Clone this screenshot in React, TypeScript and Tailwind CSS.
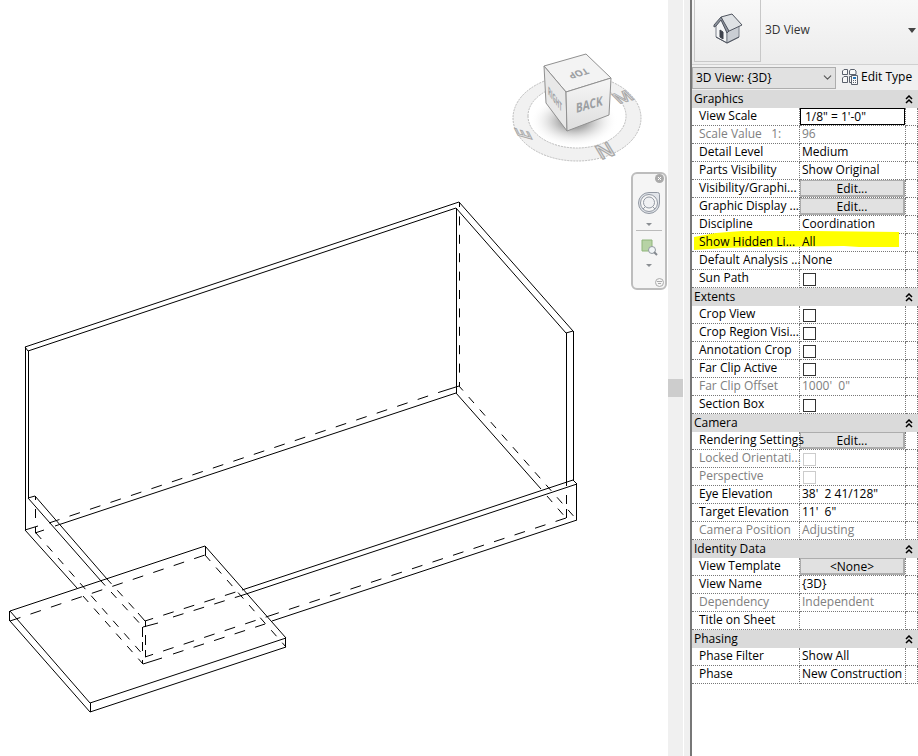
import { ChevronDown } from 'lucide-react'

interface Property {
  label: string
  value?: string
  kind?: 'text' | 'button' | 'checkbox' | 'input'
  disabled?: boolean
  highlight?: boolean
}

interface Group {
  title: string
  rows: Property[]
}

const groups: Group[] = [
  {
    title: 'Graphics',
    rows: [
      { label: 'View Scale', value: '1/8" = 1\'-0"', kind: 'input' },
      { label: 'Scale Value   1:', value: '96', disabled: true },
      { label: 'Detail Level', value: 'Medium' },
      { label: 'Parts Visibility', value: 'Show Original' },
      { label: 'Visibility/Graphi...', value: 'Edit...', kind: 'button' },
      { label: 'Graphic Display ...', value: 'Edit...', kind: 'button' },
      { label: 'Discipline', value: 'Coordination' },
      { label: 'Show Hidden Li...', value: 'All', highlight: true },
      { label: 'Default Analysis ...', value: 'None' },
      { label: 'Sun Path', kind: 'checkbox' },
    ],
  },
  {
    title: 'Extents',
    rows: [
      { label: 'Crop View', kind: 'checkbox' },
      { label: 'Crop Region Visi...', kind: 'checkbox' },
      { label: 'Annotation Crop', kind: 'checkbox' },
      { label: 'Far Clip Active', kind: 'checkbox' },
      { label: 'Far Clip Offset', value: '1000\'  0"', disabled: true },
      { label: 'Section Box', kind: 'checkbox' },
    ],
  },
  {
    title: 'Camera',
    rows: [
      { label: 'Rendering Settings', value: 'Edit...', kind: 'button' },
      { label: 'Locked Orientati...', kind: 'checkbox', disabled: true },
      { label: 'Perspective', kind: 'checkbox', disabled: true },
      { label: 'Eye Elevation', value: '38\'  2 41/128"' },
      { label: 'Target Elevation', value: '11\'  6"' },
      { label: 'Camera Position', value: 'Adjusting', disabled: true },
    ],
  },
  {
    title: 'Identity Data',
    rows: [
      { label: 'View Template', value: '<None>', kind: 'button' },
      { label: 'View Name', value: '{3D}' },
      { label: 'Dependency', value: 'Independent', disabled: true },
      { label: 'Title on Sheet', value: '' },
    ],
  },
  {
    title: 'Phasing',
    rows: [
      { label: 'Phase Filter', value: 'Show All' },
      { label: 'Phase', value: 'New Construction' },
    ],
  },
]

function ModelDrawing() {
  return (
    <svg viewBox="0 0 668 756" className="block h-auto w-full" fill="none" stroke="#000" strokeWidth="1" role="img" aria-label="3D model">
      {/* back walls */}
      <path d="M25 347 459 202 573 331M28 351 456 208 566 333 573 331M25 347 28 351M456 393 541 489M55 526 456 393" />
      <path d="M25.5 347V530M28.5 351V498M456.5 208V393M566.5 333V486M573.5 331V480" />
      {/* low walls */}
      <path d="M28 498 35 496 107 579M28 498 101 581M25 530 77 588M25 530 38 526M573 480 577 484M576.5 484V520M242 590 573 480M243 595 577 484M272 621 577 520" />
      {/* slab */}
      <path d="M10 611 205 546 286 638M10 621 90 712 286 647M10 611 90 703 286 638M9.500 611V621M285.500 638V647M90.500 703V712M205.500 546V555" />
      {/* hidden horizontal edges */}
      <g strokeDasharray="11 10.600">
        <path d="M49 523 440 392M35 533 44 530" />
        <path d="M566 518 272 615" />
        <path d="M145 621 242 590M145 657 272 615" strokeDashoffset="2.500" />
        <path d="M173 617 243 595M173 654 265 624" />
        <path d="M10 621 205 555" />
      </g>
      {/* hidden diagonal edges */}
      <g strokeDasharray="8 8.700">
        <path d="M459 386 577 520" strokeDashoffset="2" />
        <path d="M547 496 566 518" />
        <path d="M36 533 145 657" />
        <path d="M83 596 143 664" />
        <path d="M138 613 107 579M143 627 101 581" strokeDashoffset="-6" />
        <path d="M205 555 286 647" />
      </g>
      {/* hidden verticals */}
      <path d="M459.500 202V386" strokeDasharray="9 9.400" strokeDashoffset="4" />
      <path d="M35.500 496V500M35.500 509V518M35.500 527V533M566.500 495V504M566.500 509V518" />
      <path d="M145.500 621V627M142.500 627V637M145.500 635V645M142.500 642V651M145.500 650V657M142.500 660V664" />
      <path d="M138 613 145 621M143 627 158 623M143 664 162 658M440 392 459 386" />
    </svg>
  )
}

function ViewCube() {
  return (
    <svg width="142" height="112" viewBox="0 0 142 112" className="overflow-visible" role="img" aria-label="View cube">
      <defs>
        <radialGradient id="shadow">
          <stop offset="0.3" stopColor="#aaa" />
          <stop offset="1" stopColor="#fff" stopOpacity="0" />
        </radialGradient>
        <linearGradient id="back" x1="0" y1="0" x2="0" y2="1">
          <stop stopColor="#f6f6f6" />
          <stop offset="1" stopColor="#dedede" />
        </linearGradient>
      </defs>
      <path fillRule="evenodd" d="M1 65a64 43 0 1 0 128 0a64 43 0 1 0-128 0M16 63a49 32 0 1 0 98 0a49 32 0 1 0-98 0" fill="#f1f1f1" stroke="#bbb" strokeDasharray="2 1" />
      <ellipse cx="62" cy="68" rx="44" ry="26" fill="url(#shadow)" />
      <path d="M32 13 74 1 99 25 54 39Z" fill="#f3f3f3" stroke="#909090" />
      <path d="M32 13 54 39 55 78 34 50Z" fill="#e8e8e8" stroke="#909090" />
      <path d="M54 39 99 25 97 62 55 78Z" fill="url(#back)" stroke="#909090" />
      <g fontFamily="Open Sans, sans-serif" fontWeight="700" fill="#9c9fa2">
        <text transform="matrix(.83 -.24 0 1.100 64 60)" fontSize="12">BACK</text>
        <text transform="matrix(.5 .66 0 1.300 36 41)" fontSize="9">RIGHT</text>
        <text transform="matrix(-.85 .25 -.5 -.7 74 15)" fontSize="11">TOP</text>
      </g>
      <g fontFamily="Open Sans, sans-serif" fontWeight="600" fontSize="18" fill="#e4e4e4" stroke="#a6a6a6" strokeWidth="1">
        <text transform="matrix(1 -.3 .7 .7 107 51)">M</text>
        <text transform="matrix(-.5 -1 1.100 .3 21 88)">E</text>
        <text transform="matrix(1.100 -.4 .6 1 89 107)">N</text>
      </g>
    </svg>
  )
}

function NavigationBar() {
  return (
    <div className="flex h-[118px] w-9 flex-col items-center rounded-md border-2 border-[#bdbdbd] bg-[#f5f5f5] text-[#8b8f93]">
      <button aria-label="Close" className="self-end">
        <svg width="9" height="9" viewBox="0 0 9 9" className="mr-px block">
          <circle cx="4.5" cy="4.5" r="4.5" fill="#aaa" />
          <path d="m3 3 3 3m0-3-3 3" stroke="#fff" />
        </svg>
      </button>
      <button aria-label="Steering wheel" className="mt-2">
        <svg width="24" height="24" viewBox="0 0 24 24" fill="#e1e4e9" stroke="#9298a2" className="block">
          <path d="M12 1.500h8.500q2 0 2 2V12A10.500 10.500 0 1 1 12 1.500Z" />
          <circle cx="12" cy="12" r="8.500" fill="#f6f6f6" />
          <path d="m6 18 3-3m6 0 3 3" />
          <circle cx="12" cy="11.500" r="5.500" fill="#f0f1f3" />
        </svg>
      </button>
      <button aria-label="Wheel options" className="mt-2">
        <svg width="6" height="3" viewBox="0 0 6 3" fill="currentColor" className="block">
          <path d="M0 0h6L3 3Z" />
        </svg>
      </button>
      <div className="mt-1 h-px w-[26px] bg-[#bbb]" />
      <button aria-label="Zoom" className="mt-2">
        <svg width="17" height="17" viewBox="0 0 17 17" className="block">
          <path d="M1 1h10v11H1Z" fill="#b7d3a5" stroke="#8fb57a" />
          <circle cx="11" cy="11" r="3.500" fill="#f1f5f7" stroke="#9299a0" />
          <path d="m13 13 3 3" stroke="#858a90" strokeWidth="2" />
        </svg>
      </button>
      <button aria-label="Zoom options" className="mt-2">
        <svg width="6" height="3" viewBox="0 0 6 3" fill="currentColor" className="block">
          <path d="M0 0h6L3 3Z" />
        </svg>
      </button>
      <button aria-label="Customize" className="mt-auto self-end pr-px pb-px">
        <svg width="9" height="9" viewBox="0 0 9 9" fill="#f5f5f5" stroke="#aaa" className="block">
          <circle cx="4.500" cy="4.500" r="4" />
          <path d="M2 3.500h5M3 5.500h3" />
        </svg>
      </button>
    </div>
  )
}

function HouseIcon() {
  return (
    <svg width="30" height="31" viewBox="0 0 30 31" strokeLinejoin="round" stroke="#50555f">
      <path d="M3 12v12l11 6V17L8 6Z" fill="#f4f5f6" stroke="#7b808a" />
      <path d="m14 17 12-5v12l-12 6Z" fill="#c9cdd3" stroke="#7b808a" />
      <path d="M8 4 19 1l10 11-15 7Z" fill="#dfe2e5" />
      <path d="M8 4 1 12v2l2-1 5-6 6 13 2-2Z" fill="#8f959f" />
      <path d="M7 17l3 2v7l-3-2Z" fill="#3f434c" stroke="#3f434c" />
      <path d="M3 24l11 6 12-6" fill="none" />
    </svg>
  )
}

function TypeIcon() {
  return (
    <svg width="17" height="17" viewBox="0 0 17 17" fill="#f8f8f8" stroke="#5b616c">
      <path d="M3 1.500h3.500v5h-5V3ZM9.500 1.500h4l1.500 1.500v3.500H8.500V3ZM3 8.500h3.500v6h-5V10ZM8.500 8.500h5v6h-5Z" />
      <path d="M10.500 7.500h6v9h-6Z" />
      <path d="M12 9h3v2h-3Z" fill="#2675b8" stroke="none" />
      <path d="M12 12.500h3M12 14.500h3" strokeDasharray="1 1" />
    </svg>
  )
}

function PropertyValue({ row, id }: { row: Property; id: string }) {
  if (row.kind === 'button') {
    return (
      <button id={id} className="block h-[17px] w-full border border-r-2 border-b-2 border-[#adadad] bg-[#e1e1e1] text-center leading-4">
        {row.value}
      </button>
    )
  }
  if (row.kind === 'checkbox') {
    return (
      <div className="h-[17px] pt-[3px] pl-[3px]">
        <input id={id} type="checkbox" disabled={row.disabled} className="block size-[13px] appearance-none border border-[#333] bg-white disabled:border-[#ccc]" />
      </div>
    )
  }
  if (row.kind === 'input') {
    return <input id={id} defaultValue={row.value} className="block h-[17px] w-full border border-black bg-white px-1 leading-[14px] outline-none" />
  }
  return <span className="block h-[17px] pl-[2px] leading-4">{row.value}</span>
}

function PropertyGroup({ group }: { group: Group }) {
  return (
    <tbody>
      <tr className="h-[18px] bg-[#dadada]">
        <th colSpan={3} className="p-0 text-left font-normal">
          <button className="flex h-[18px] w-full items-center justify-between pr-[5px] pl-[2px]">
            {group.title}
            <svg width="8" height="9" viewBox="0 0 8 9" fill="none" stroke="#000" strokeWidth="1.500">
              <path d="m1 4 3-3 3 3M1 8l3-3 3 3" />
            </svg>
          </button>
        </th>
      </tr>
      {group.rows.map((row) => {
        const id = row.label.replace(/\W+/g, '-').toLowerCase()
        return (
          <tr key={id} className={row.disabled ? 'h-[18px] text-[#808080]' : 'h-[18px]'}>
            <td className="relative border-r border-b border-dotted border-[#777] p-0">
              {row.highlight && (
                <svg className="absolute -top-1 left-[2px]" width="205" height="20" viewBox="0 0 205 20" aria-hidden="true">
                  <path d="M0 7 22 3 48 1H120L205 2V17H165L150 16 60 17 30 18 0 20Z" fill="#ff0" />
                </svg>
              )}
              <label htmlFor={id} className="relative z-10 block h-[17px] pl-[7px] leading-4 whitespace-pre">{row.label}</label>
            </td>
            <td className="border-r border-b border-dotted border-[#777] p-0 whitespace-pre">
              <div className="relative"><PropertyValue row={row} id={id} /></div>
            </td>
            <td className="border-r border-b border-dotted border-[#777] p-0" />
          </tr>
        )
      })}
    </tbody>
  )
}

function PropertiesPanel() {
  return (
    <aside className="w-[228px] shrink-0 border-l-2 border-[#777] bg-white text-black">
      <div className="bg-[#f0f0f0]">
        <button className="flex h-[65px] w-full items-center border-b border-[#d0d0d0] bg-linear-to-b from-[#f8f8f8] to-[#ececec] pr-[2px] pl-[2px] text-left">
          <span className="flex h-[62px] w-[67px] items-center justify-center self-start border-x border-b border-[#c8c8c8] pb-1">
            <HouseIcon />
          </span>
          <span className="flex-1 pb-1 pl-1 text-[#333]">3D View</span>
          <svg width="8" height="5" viewBox="0 0 8 5" className="mb-1 block" fill="#444">
            <path d="M0 0h8L4 5Z" />
          </svg>
        </button>
        <div className="flex h-[25px] items-center">
          <div className="relative mt-px w-36 shrink-0">
            <select aria-label="View" className="block h-[22px] w-full appearance-none border border-[#adadad] bg-[#e1e1e1] pl-[3px]">
              <option>3D View: {'{3D}'}</option>
            </select>
            <ChevronDown size={13} strokeWidth={2} className="pointer-events-none absolute top-1 right-[2px] text-[#555]" />
          </div>
          <button className="flex flex-1 items-center gap-[3px] pb-[2px] pl-[5px] whitespace-nowrap">
            <TypeIcon />
            Edit Type
          </button>
        </div>
      </div>
      <table className="w-full table-fixed border-separate border-spacing-0">
        <colgroup>
          <col className="w-[108px]" />
          <col />
          <col className="w-3" />
        </colgroup>
        {groups.map((group) => (
          <PropertyGroup key={group.title} group={group} />
        ))}
      </table>
    </aside>
  )
}

export default function App() {
  return (
    <main className="flex min-h-screen bg-white font-['Open_Sans',sans-serif] text-xs">
      <section className="relative min-w-0 flex-1">
        <ModelDrawing />
        <div className="absolute top-[53px] right-[14px]"><ViewCube /></div>
        <div className="absolute top-[172px] right-px"><NavigationBar /></div>
      </section>
      <div className="flex w-[22px] shrink-0 flex-col items-start bg-[#f0f0f0]">
        <div className="flex w-4 flex-1 flex-col justify-center border-r border-white pt-[19px]">
          <div className="h-[18px] bg-[#cdcdcd]" />
        </div>
      </div>
      <PropertiesPanel />
    </main>
  )
}
